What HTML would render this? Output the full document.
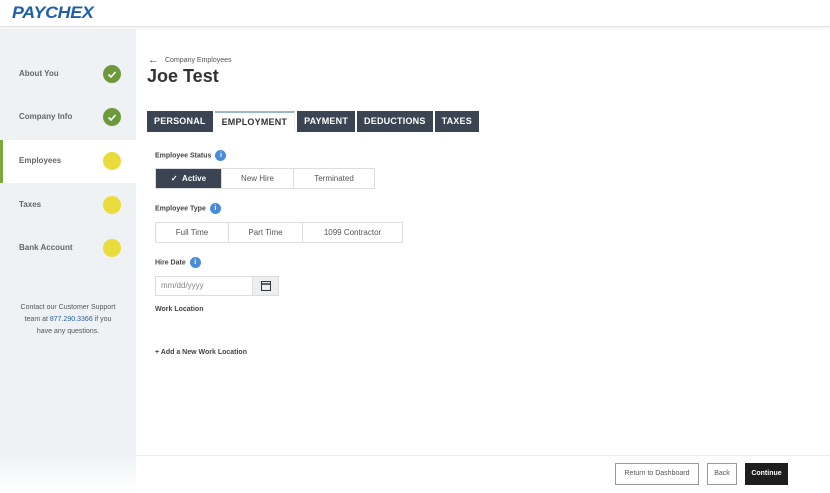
<!DOCTYPE html>
<html><head><meta charset="utf-8"><style>
*{margin:0;padding:0;box-sizing:border-box}
body{width:830px;height:493px;overflow:hidden;background:#fff;font-family:"Liberation Sans",Arial,sans-serif;position:relative;color:#333}
.hdr{position:absolute;left:0;top:0;width:830px;height:27px;background:#fff;border-bottom:1px solid #e3e3e3;box-shadow:0 1px 3px rgba(0,0,0,.08)}
.logo{position:absolute;left:12px;top:3px;font-size:17px;font-weight:bold;font-style:italic;color:#1f5fa8;letter-spacing:-0.3px;transform:scaleX(1.05);transform-origin:left}
.side{position:absolute;left:0;top:29px;width:136px;height:426px;background:#eef2f5}
.item{position:absolute;left:0;width:136px;height:43px}
.item span{position:absolute;left:19px;top:16px;font-size:8px;font-weight:bold;color:#666}
.dot{position:absolute;left:103px;top:12px;width:18px;height:18px;border-radius:50%}
.g{background:#6c9a3a}.y{background:#eadc3c}
.act{background:#fff;border-left:3px solid #7ba83b}
.act span{left:16px}.act .dot{left:100px}
.help{position:absolute;left:14px;width:108px;text-align:center;font-size:7px;line-height:12px;color:#555}
.help b{color:#2b5f9e;font-weight:normal}
.fade{position:absolute;left:0;top:455px;width:136px;height:38px;background:linear-gradient(#eef2f5,#fff)}
.crumb{position:absolute;left:148px;top:54px;font-size:7px;color:#555}
h1{position:absolute;left:147px;top:66px;font-size:18px;font-weight:bold;color:#333}
.tabs{position:absolute;left:147px;top:111px;height:21px;display:flex}
.tab{height:21px;background:#3a4452;color:#fff;font-size:9px;font-weight:bold;padding:0 7px;line-height:21px;margin-right:2px;letter-spacing:.2px}
.tab.on{background:#fff;color:#333;border-top:2px solid #9cb6c6;line-height:18px;border-right:1px solid #eee}
.lbl{position:absolute;left:155px;font-size:7px;font-weight:bold;color:#444}
.i{display:inline-block;width:11px;height:11px;border-radius:50%;background:#4a8bd8;vertical-align:middle;margin-left:4px;color:#fff;font-size:7px;text-align:center;line-height:11px}
.seg{position:absolute;left:155px;display:flex;height:21px;border:1px solid #ddd}
.seg div{font-size:8px;color:#555;line-height:19px;text-align:center;border-right:1px solid #ddd}
.seg div:last-child{border-right:none}
.seg .on{background:#3a4452;color:#fff;font-weight:bold}
.date{position:absolute;left:155px;top:276px;width:124px;height:20px;border:1px solid #ddd;font-size:8px;color:#888;line-height:18px;padding-left:5px}
.cal{position:absolute;right:0;top:0;width:26px;height:18px;background:#eceeef;border-left:1px solid #ddd}
.foot{position:absolute;left:136px;top:455px;width:694px;height:38px;border-top:1px solid #eee}
.btn{position:absolute;top:463px;height:22px;font-size:7px;line-height:20px;text-align:center;border:1px solid #999;color:#555;background:#fff}
</style></head><body>
<div class="hdr"><div class="logo">PAYCHEX</div></div>
<div class="side">
<div class="item" style="top:24px"><span>About You</span><div class="dot g"><svg width="18" height="18"><path d="M5.5 9.5l2.5 2.5 4.5-5" stroke="#fff" stroke-width="1.6" fill="none"/></svg></div></div>
<div class="item" style="top:67px"><span>Company Info</span><div class="dot g"><svg width="18" height="18"><path d="M5.5 9.5l2.5 2.5 4.5-5" stroke="#fff" stroke-width="1.6" fill="none"/></svg></div></div>
<div class="item act" style="top:111px"><span>Employees</span><div class="dot y"></div></div>
<div class="item" style="top:155px"><span>Taxes</span><div class="dot y"></div></div>
<div class="item" style="top:198px"><span>Bank Account</span><div class="dot y"></div></div>
<div class="help" style="top:273px">Contact our Customer Support<br>team at <b>877.290.3366</b> if you<br>have any questions.</div>
</div>
<div class="fade"></div>
<div class="crumb"><span style="font-size:11px;vertical-align:middle;margin-right:6px">←</span>Company Employees</div>
<h1>Joe Test</h1>
<div class="tabs"><div class="tab">PERSONAL</div><div class="tab on">EMPLOYMENT</div><div class="tab">PAYMENT</div><div class="tab">DEDUCTIONS</div><div class="tab">TAXES</div></div>
<div class="lbl" style="top:150px">Employee Status<span class="i">i</span></div>
<div class="seg" style="top:168px"><div class="on" style="width:66px">✓&nbsp;&nbsp;Active</div><div style="width:72px">New Hire</div><div style="width:80px">Terminated</div></div>
<div class="lbl" style="top:203px">Employee Type<span class="i">i</span></div>
<div class="seg" style="top:222px"><div style="width:73px">Full Time</div><div style="width:74px">Part Time</div><div style="width:99px">1099 Contractor</div></div>
<div class="lbl" style="top:257px">Hire Date<span class="i">i</span></div>
<div class="date">mm/dd/yyyy<div class="cal"><svg width="26" height="18"><rect x="8.5" y="4.5" width="9" height="9" fill="none" stroke="#333"/><line x1="8.5" y1="7" x2="17.5" y2="7" stroke="#333" stroke-width="1.5"/></svg></div></div>
<div class="lbl" style="top:306px">Work Location</div>
<div class="lbl" style="top:349px">+ Add a New Work Location</div>
<div class="foot"></div>
<div class="btn" style="left:615px;width:84px">Return to Dashboard</div>
<div class="btn" style="left:707px;width:30px">Back</div>
<div class="btn" style="left:745px;width:43px;background:#1e1e1e;color:#fff;border-color:#1e1e1e;font-weight:bold">Continue</div>
</body></html>
